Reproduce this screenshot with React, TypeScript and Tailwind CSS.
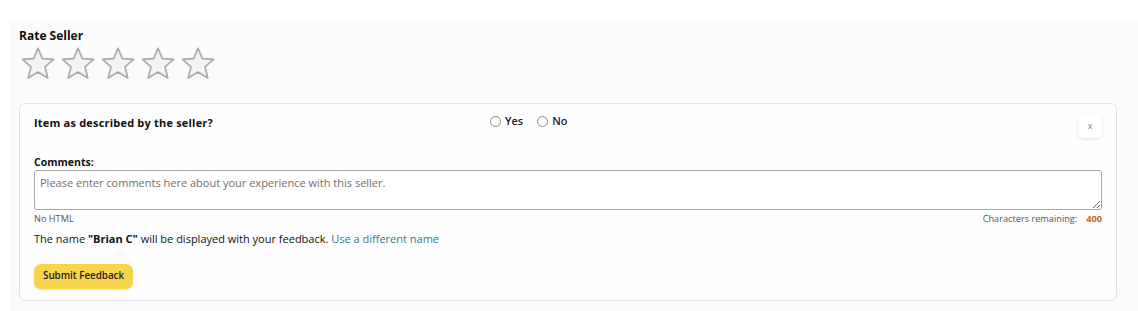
import { useState } from "react";

function Star() {
  return (
    <svg width="36" height="35" viewBox="0 0 36 35" className="block">
      <path
        d="M18 2.2 L22.4 12.6 L33.6 13.4 L25 20.8 L27.8 32 L18 26 L8.2 32 L11 20.8 L2.4 13.4 L13.6 12.6 Z"
        fill="#f4f4f4"
        stroke="#a9a9a9"
        strokeWidth="1.6"
        strokeLinejoin="round"
      />
    </svg>
  );
}

function Radio({ label }: { label: string }) {
  return (
    <label className="flex items-center gap-[4px] text-[11px] font-semibold text-[#222]">
      <span className="h-[11px] w-[11px] rounded-full border border-[#8a8a8a] bg-white" />
      {label}
    </label>
  );
}

export default function App() {
  const [text, setText] = useState("");
  return (
    <div className="h-[311px] w-[1138px] bg-white pt-[20px] pl-[10px] font-['Open_Sans',sans-serif] text-[#111]">
      <div className="h-[291px] bg-[#fbfbfb] pl-[9px] pr-[21px] pt-[8px]">
        <div className="text-[12px] font-bold leading-[16px]">Rate Seller</div>
        <div className="mt-[2px] flex gap-[4px] pl-[1px]">
          <Star />
          <Star />
          <Star />
          <Star />
          <Star />
        </div>
        <div className="mt-[22px] h-[198px] rounded-[6px] border border-[#e2e2e2] bg-[#fefefe] px-[14px] pt-[10px]">
          <div className="flex items-start">
            <div className="mt-[1px] w-[456px] text-[11px] font-bold tracking-[0.2px]">Item as described by the seller?</div>
            <div className="-mt-[1px] flex gap-[14px]">
              <Radio label="Yes" />
              <Radio label="No" />
            </div>
            <button className="ml-auto flex h-[24px] w-[24px] items-center justify-center rounded-[5px] bg-white text-[9px] text-[#777] shadow-[0_1px_3px_rgba(0,0,0,0.12)]">
              x
            </button>
          </div>
          <div className="mt-[17px] text-[10.5px] font-bold leading-[14px]">Comments:</div>
          <textarea
            value={text}
            onChange={(e) => setText(e.target.value)}
            placeholder="Please enter comments here about your experience with this seller."
            className="mt-[1px] block h-[40px] w-full resize-y rounded-[3px] border border-[#a6a6a6] bg-white px-[5px] pt-[5px] text-[11px] leading-[14px] placeholder:text-[#6f6f6f] outline-none"
          />
          <div className="mt-[3px] flex text-[9.2px] leading-[12px] text-[#555]">
            <span>No HTML</span>
            <span className="ml-auto">
              Characters remaining:
              <span className="ml-[9px] font-bold text-[#c7641d]">{400 - text.length}</span>
            </span>
          </div>
          <div className="mt-[7px] text-[11px] leading-[14px] text-[#111]">
            The name <b>"Brian C"</b> will be displayed with your feedback.{" "}
            <a className="text-[#2b7c93]">Use a different name</a>
          </div>
          <button className="mt-[18px] h-[25px] rounded-[7px] bg-[#f7d44c] px-[9px] text-[9.8px] font-semibold text-[#222] shadow-[0_1px_2px_rgba(0,0,0,0.1)]">
            Submit Feedback
          </button>
        </div>
      </div>
    </div>
  );
}
